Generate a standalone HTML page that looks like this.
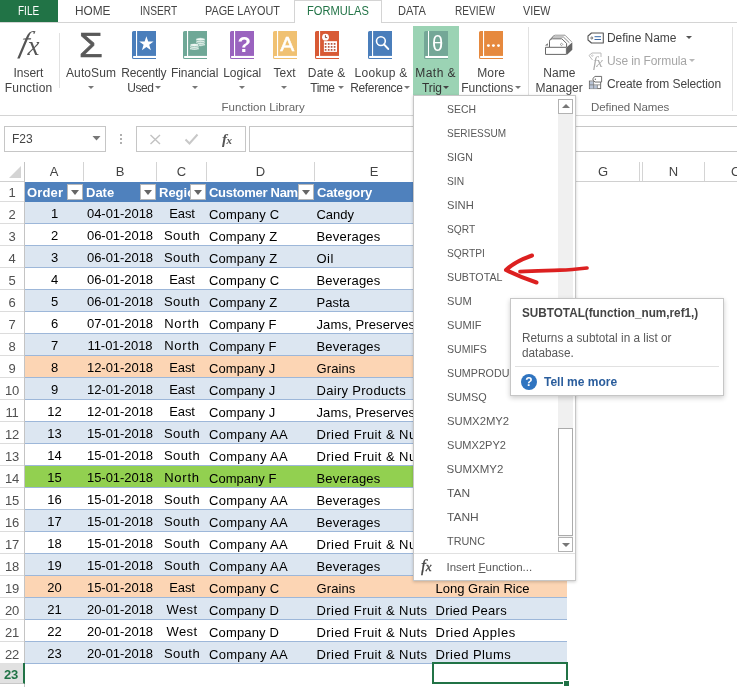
<!DOCTYPE html><html><head><meta charset="utf-8"><title>Excel</title><style>*{box-sizing:border-box;margin:0;padding:0}
html,body{width:737px;height:687px;overflow:hidden;background:#fff}
#app{will-change:transform;position:relative;width:737px;height:687px;overflow:hidden;background:#fff;font-family:"Liberation Sans",sans-serif;color:#444}
.abs{position:absolute}
/* tabs */
.tabs{position:absolute;left:0;top:0;width:737px;height:23px;border-bottom:1px solid #d4d4d4}
.tab{position:absolute;top:0;height:23px;line-height:22px;font-size:12px;color:#444;white-space:nowrap;text-align:center}
.tab.file{left:0;width:58px;background:#217346;height:22px}
.tab.tt{transform-origin:0 50%;text-align:left;font-size:12.5px}
.tab.tf{color:#fff}.tab.ta{color:#217346}
.tab.act{left:294px;width:88px;height:23px;border:1px solid #d4d4d4;border-bottom:none;background:#fff}
/* ribbon */
.ribbon{position:absolute;left:0;top:24px;width:737px;height:92px;border-bottom:1px solid #d4d4d4;background:#fff}
.rb{position:absolute;top:0;font-size:12px;line-height:16px;color:#444;text-align:center;white-space:nowrap}
.rb .l1{position:absolute;left:0;width:100%;top:40px}
.rb .l2{position:absolute;left:0;width:100%;top:56px}
.arr{display:inline-block;width:0;height:0;border-left:3px solid transparent;border-right:3px solid transparent;border-top:3px solid #777;vertical-align:middle;margin-left:3px}
.arr.solo{margin-left:0;position:relative;top:-1px}
.vsep{position:absolute;width:1px;background:#e1e1e1}
.glabel{position:absolute;top:76px;font-size:11.5px;color:#666;white-space:nowrap;line-height:14px}
.sm{position:absolute;font-size:12px;color:#444;white-space:nowrap;line-height:16px}
/* formula bar */
.fbar{position:absolute;left:0;top:116px;width:737px;height:44px;background:#fff}
.box{position:absolute;top:10px;height:26px;border:1px solid #c6c6c6;background:#fff}
/* grid */
.grid{position:absolute;left:0;top:0;width:737px;height:687px;font-size:13px;color:#000}
.colhdr{position:absolute;left:0;top:160px;width:737px;height:22px;background:#fff}
.hl{position:absolute;height:1px;background:#d0d0d0}
.vl{position:absolute;left:24px;top:162px;width:1px;height:525px;background:#c4c4c4}
.corner{position:absolute;left:9px;top:6px}
.ch{position:absolute;top:2px;height:19px;line-height:20px;text-align:center;color:#444;font-size:13px;border-right:1px solid #d4d4d4}
.ch.dbl{border-left:1px solid #d4d4d4}
.rh{position:absolute;left:0;width:24px;height:22px;line-height:25px;text-align:center;color:#505050;font-size:13px;border-bottom:1px solid #dcdcdc;letter-spacing:-0.3px}
.rh.sel{background:#e1e1e1;color:#217346;font-weight:bold;width:25px;height:21px;line-height:23px;margin-top:-1px;padding-right:1px;border-right:2px solid #217346;border-bottom:1px solid #c8c8c8}
.hdrrow{position:absolute;left:25px;width:542px;height:20px;background:#4f81bd}
.hc{position:absolute;top:0;height:20px;overflow:hidden;color:#fff;font-weight:bold;line-height:22px;white-space:nowrap;padding-left:2px}
.fb{position:absolute;right:1px;top:2px;width:16px;height:16px;background:#fff;border:1px solid #b8b8b8}
.fb i{position:absolute;left:3px;top:5px;width:0;height:0;border-left:4px solid transparent;border-right:4px solid transparent;border-top:5px solid #666}
.row{position:absolute;left:25px;width:542px;height:22px;border-bottom:1px solid #9db7d9}
.row.b{background:#dce6f1}.row.w{background:#fff}.row.o{background:#fcd5b4}.row.g{background:#92d050}
.c{position:absolute;top:0;height:22px;line-height:25px;white-space:nowrap;overflow:hidden}
.c.ac{text-align:center;line-height:23px}.c.al{padding-left:3px}
.selcell{position:absolute;left:432px;top:662px;width:136px;height:22px;border:2px solid #217346;background:#fff}
.selhandle{position:absolute;left:563px;top:680px;width:7px;height:7px;background:#217346;border:1px solid #fff}
/* popup */
.popup{position:absolute;left:413px;top:95px;width:163px;height:486px;background:#fff;border:1px solid #c6c6c6;box-shadow:0 1px 3px rgba(0,0,0,.2);font-size:12px;color:#444}
.mi{position:absolute;left:32.5px;height:24px;line-height:24px;white-space:nowrap;color:#595959;font-size:11.5px;transform-origin:0 50%}
.msep{position:absolute;left:0;top:457px;width:161px;height:1px;background:#e1e1e1}
.mfx{position:absolute;left:7px;top:459px;font-family:"Liberation Serif",serif;font-style:italic;font-size:17px;line-height:22px;color:#444;-webkit-text-stroke:0.3px #444}
.mfx span{font-size:13px}
.strack{position:absolute;left:144px;top:3px;width:15px;height:453px;background:#f0f0f0}
.sbtn{position:absolute;left:144px;width:15px;height:15px;background:#fff;border:1px solid #b2b2b2}
.sbtn.up{top:3px}.sbtn.dn{top:441px}
.sbtn i{position:absolute;left:3px;width:0;height:0;border-left:4px solid transparent;border-right:4px solid transparent}
.sbtn.up i{top:4px;border-bottom:4px solid #777}
.sbtn.dn i{top:5px;border-top:4px solid #777}
.sthumb{position:absolute;left:144px;top:332px;width:15px;height:108px;background:#fff;border:1px solid #ababab}
/* tooltip */
.tip{position:absolute;left:510px;top:298px;width:214px;height:98px;background:#fff;border:1px solid #c6c6c6;box-shadow:0 2px 5px rgba(0,0,0,.2);font-size:12px;color:#555}
.tip .t{position:absolute;left:11px;top:6px;font-weight:bold;color:#444;line-height:16px;white-space:nowrap;transform:scaleX(.978);transform-origin:0 50%}
.tip .d{position:absolute;left:11px;top:32px;line-height:15px;white-space:nowrap;transform:scaleX(.983);transform-origin:0 50%;color:#595959}
.tip .s{position:absolute;left:4px;top:67px;width:204px;height:1px;background:#e1e1e1}
.tip .q{position:absolute;left:10px;top:75px;width:16px;height:16px;border-radius:8px;background:#2f74c0;color:#fff;font-weight:bold;font-size:12px;line-height:16px;text-align:center}
.tip .m{position:absolute;left:33px;top:75px;font-weight:bold;color:#2a5d9c;line-height:16px;white-space:nowrap}
.lb{position:absolute;font-size:12px;line-height:16px;white-space:nowrap;color:#444}
.ar{position:absolute;width:0;height:0;border-left:3px solid transparent;border-right:3px solid transparent;border-top:3px solid #777}
</style></head><body><div id="app">
<div class="tabs">
<div class="tab file"></div>
<div class="tab act"></div>
<div class="tab tt tf" id="tab0" style="left:18.3px;transform:scaleX(0.8)">FILE</div>
<div class="tab tt" id="tab1" style="left:75.3px;transform:scaleX(0.945)">HOME</div>
<div class="tab tt" id="tab2" style="left:139.6px;transform:scaleX(0.815)">INSERT</div>
<div class="tab tt" id="tab3" style="left:204.7px;transform:scaleX(0.868)">PAGE LAYOUT</div>
<div class="tab tt ta" id="tab4" style="left:307px;transform:scaleX(0.89)">FORMULAS</div>
<div class="tab tt" id="tab5" style="left:397.5px;transform:scaleX(0.885)">DATA</div>
<div class="tab tt" id="tab6" style="left:454.5px;transform:scaleX(0.812)">REVIEW</div>
<div class="tab tt" id="tab7" style="left:523px;transform:scaleX(0.86)">VIEW</div>
</div>
<div class="ribbon">
<div class="abs" style="left:413px;top:2px;width:46px;height:70px;background:#9bd3b4"></div>
<div class="lb" style="left:13.4px;top:41px;letter-spacing:0px;color:#444">Insert</div>
<div class="lb" style="left:4.8px;top:56px;letter-spacing:0.2px;color:#444">Function</div>
<div class="lb" style="left:66px;top:41px;letter-spacing:0.1px;color:#444">AutoSum</div>
<div class="lb" style="left:121.2px;top:41px;letter-spacing:-0.19px;color:#444">Recently</div>
<div class="lb" style="left:127.3px;top:56px;letter-spacing:-0.5px;color:#444">Used</div>
<i class="ar" style="left:154.8px;top:62px;border-top-color:#777"></i>
<div class="lb" style="left:171px;top:41px;letter-spacing:-0.09px;color:#444">Financial</div>
<div class="lb" style="left:223.2px;top:41px;letter-spacing:0px;color:#444">Logical</div>
<div class="lb" style="left:273.6px;top:41px;letter-spacing:0px;color:#444">Text</div>
<div class="lb" style="left:307.8px;top:41px;letter-spacing:0.17px;color:#444">Date &amp;</div>
<div class="lb" style="left:310.3px;top:56px;letter-spacing:-0.5px;color:#444">Time</div>
<i class="ar" style="left:338px;top:62px;border-top-color:#777"></i>
<div class="lb" style="left:354.6px;top:41px;letter-spacing:0.27px;color:#444">Lookup &amp;</div>
<div class="lb" style="left:350.2px;top:56px;letter-spacing:-0.33px;color:#444">Reference</div>
<i class="ar" style="left:403.9px;top:62px;border-top-color:#777"></i>
<div class="lb" style="left:415.3px;top:41px;letter-spacing:0.45px;color:#333">Math &amp;</div>
<div class="lb" style="left:422px;top:56px;letter-spacing:-0.1px;color:#333">Trig</div>
<i class="ar" style="left:443.1px;top:62px;border-top-color:#444"></i>
<div class="lb" style="left:477.2px;top:41px;letter-spacing:0.17px;color:#444">More</div>
<div class="lb" style="left:461.2px;top:56px;letter-spacing:0px;color:#444">Functions</div>
<i class="ar" style="left:515px;top:62px;border-top-color:#777"></i>
<div class="lb" style="left:543.3px;top:41px;letter-spacing:0px;color:#444">Name</div>
<div class="lb" style="left:535.4px;top:56px;letter-spacing:0px;color:#444">Manager</div>
<i class="ar" style="left:88.4px;top:61.5px"></i>
<i class="ar" style="left:191.7px;top:61.5px"></i>
<i class="ar" style="left:239.4px;top:61.5px"></i>
<i class="ar" style="left:281.1px;top:61.5px"></i>
<div class="vsep" style="left:59px;top:9px;height:55px"></div>
<div class="vsep" style="left:528px;top:3px;height:84px"></div>
<div class="sm" style="left:607px;top:6px;letter-spacing:-0.07px">Define Name</div><i class="ar" style="left:685.5px;top:12px;border-top-color:#555"></i>
<div class="sm" style="left:607px;top:29px;color:#a6a6a6;letter-spacing:-0.11px">Use in Formula</div><i class="ar" style="left:688.5px;top:35px;border-top-color:#b8b8b8"></i>
<div class="sm" style="left:607px;top:52px;letter-spacing:-0.1px">Create from Selection</div>
<div class="vsep" style="left:732px;top:3px;height:84px"></div>
<svg class="abs" style="left:132px;top:7px" width="24" height="28" viewBox="0 0 24 28"><path d="M1.6 0H4V25H2Q1.2 25 1.2 26Q1.2 27 2 27H24V28H1.6Q0 28 0 26.4V1.6Q0 0 1.6 0Z" fill="#4a7ebb"/><path d="M4 0H5.1V25H24V27H2Q1.2 27 1.2 26Q1.2 25 2 25H4Z" fill="#fff"/><rect x="5.1" y="0" width="18.9" height="24.9" fill="#4a7ebb"/><path d="M14.4 5.2L16.2 10.6H21.6L17.2 13.8L18.9 19.2L14.4 15.9L9.9 19.2L11.6 13.8L7.2 10.6H12.6Z" fill="#fff"/></svg><svg class="abs" style="left:183px;top:7px" width="24" height="28" viewBox="0 0 24 28"><path d="M1.6 0H4V25H2Q1.2 25 1.2 26Q1.2 27 2 27H24V28H1.6Q0 28 0 26.4V1.6Q0 0 1.6 0Z" fill="#6fa897"/><path d="M4 0H5.1V25H24V27H2Q1.2 27 1.2 26Q1.2 25 2 25H4Z" fill="#fff"/><rect x="5.1" y="0" width="18.9" height="24.9" fill="#6fa897"/><ellipse cx="17.5" cy="13.55" rx="4.6" ry="1.6" fill="#eef7f3" stroke="#6fa897" stroke-width="0.6"/><ellipse cx="17.5" cy="11.80" rx="4.6" ry="1.6" fill="#eef7f3" stroke="#6fa897" stroke-width="0.6"/><ellipse cx="17.5" cy="10.05" rx="4.6" ry="1.6" fill="#eef7f3" stroke="#6fa897" stroke-width="0.6"/><ellipse cx="17.5" cy="8.30" rx="4.6" ry="1.6" fill="#eef7f3" stroke="#6fa897" stroke-width="0.6"/><ellipse cx="11.4" cy="17.50" rx="4.6" ry="1.6" fill="#eef7f3" stroke="#6fa897" stroke-width="0.6"/><ellipse cx="11.4" cy="15.75" rx="4.6" ry="1.6" fill="#eef7f3" stroke="#6fa897" stroke-width="0.6"/><ellipse cx="11.4" cy="14.00" rx="4.6" ry="1.6" fill="#eef7f3" stroke="#6fa897" stroke-width="0.6"/></svg><svg class="abs" style="left:230px;top:7px" width="24" height="28" viewBox="0 0 24 28"><path d="M1.6 0H4V25H2Q1.2 25 1.2 26Q1.2 27 2 27H24V28H1.6Q0 28 0 26.4V1.6Q0 0 1.6 0Z" fill="#9a63bf"/><path d="M4 0H5.1V25H24V27H2Q1.2 27 1.2 26Q1.2 25 2 25H4Z" fill="#fff"/><rect x="5.1" y="0" width="18.9" height="24.9" fill="#9a63bf"/><text x="14.3" y="20.5" font-family="Liberation Sans, sans-serif" font-weight="bold" font-size="22" fill="#fff" text-anchor="middle">?</text></svg><svg class="abs" style="left:273px;top:7px" width="24" height="28" viewBox="0 0 24 28"><path d="M1.6 0H4V25H2Q1.2 25 1.2 26Q1.2 27 2 27H24V28H1.6Q0 28 0 26.4V1.6Q0 0 1.6 0Z" fill="#f0c172"/><path d="M4 0H5.1V25H24V27H2Q1.2 27 1.2 26Q1.2 25 2 25H4Z" fill="#fff"/><rect x="5.1" y="0" width="18.9" height="24.9" fill="#f0c172"/><text x="14.2" y="19.8" font-family="Liberation Sans, sans-serif" font-size="21" fill="#fff" stroke="#fff" stroke-width="0.5" text-anchor="middle">A</text></svg><svg class="abs" style="left:315px;top:7px" width="24" height="28" viewBox="0 0 24 28"><path d="M1.6 0H4V25H2Q1.2 25 1.2 26Q1.2 27 2 27H24V28H1.6Q0 28 0 26.4V1.6Q0 0 1.6 0Z" fill="#d85a35"/><path d="M4 0H5.1V25H24V27H2Q1.2 27 1.2 26Q1.2 25 2 25H4Z" fill="#fff"/><rect x="5.1" y="0" width="18.9" height="24.9" fill="#d85a35"/><circle cx="10.5" cy="6.2" r="3.4" fill="#fff"/><path d="M10.4 4.2V6.6H12.2" fill="none" stroke="#7a3a2a" stroke-width="0.9"/><rect x="8.9" y="10.2" width="13.1" height="10.7" fill="#fff"/><rect x="9.75" y="12.05" width="1.7" height="1.7" fill="#b4533c"/><rect x="9.75" y="15.05" width="1.7" height="1.7" fill="#b4533c"/><rect x="9.75" y="18.05" width="1.7" height="1.7" fill="#b4533c"/><rect x="12.85" y="12.05" width="1.7" height="1.7" fill="#b4533c"/><rect x="12.85" y="15.05" width="1.7" height="1.7" fill="#b4533c"/><rect x="12.85" y="18.05" width="1.7" height="1.7" fill="#b4533c"/><rect x="15.75" y="12.05" width="1.7" height="1.7" fill="#b4533c"/><rect x="15.75" y="15.05" width="1.7" height="1.7" fill="#b4533c"/><rect x="15.75" y="18.05" width="1.7" height="1.7" fill="#b4533c"/><rect x="18.75" y="12.05" width="1.7" height="1.7" fill="#b4533c"/><rect x="18.75" y="15.05" width="1.7" height="1.7" fill="#b4533c"/><rect x="18.75" y="18.05" width="1.7" height="1.7" fill="#b4533c"/></svg><svg class="abs" style="left:368px;top:7px" width="24" height="28" viewBox="0 0 24 28"><path d="M1.6 0H4V25H2Q1.2 25 1.2 26Q1.2 27 2 27H24V28H1.6Q0 28 0 26.4V1.6Q0 0 1.6 0Z" fill="#4a7ebb"/><path d="M4 0H5.1V25H24V27H2Q1.2 27 1.2 26Q1.2 25 2 25H4Z" fill="#fff"/><rect x="5.1" y="0" width="18.9" height="24.9" fill="#4a7ebb"/><circle cx="12.9" cy="10.1" r="4.4" fill="none" stroke="#fff" stroke-width="1.6"/><path d="M16 13.4L20.2 17.9" stroke="#fff" stroke-width="2.1" stroke-linecap="round"/></svg><svg class="abs" style="left:424px;top:7px" width="24" height="28" viewBox="0 0 24 28"><path d="M1.6 0H4V25H2Q1.2 25 1.2 26Q1.2 27 2 27H24V28H1.6Q0 28 0 26.4V1.6Q0 0 1.6 0Z" fill="#74a797"/><path d="M4 0H5.1V25H24V27H2Q1.2 27 1.2 26Q1.2 25 2 25H4Z" fill="#fff"/><rect x="5.1" y="0" width="18.9" height="24.9" fill="#74a797"/><text x="14.9" y="20.3" font-family="Liberation Sans, sans-serif" font-size="22" fill="#fff" text-anchor="middle" transform="scale(.92 1)">θ</text></svg><svg class="abs" style="left:479px;top:7px" width="24" height="28" viewBox="0 0 24 28"><path d="M1.6 0H4V25H2Q1.2 25 1.2 26Q1.2 27 2 27H24V28H1.6Q0 28 0 26.4V1.6Q0 0 1.6 0Z" fill="#e6893e"/><path d="M4 0H5.1V25H24V27H2Q1.2 27 1.2 26Q1.2 25 2 25H4Z" fill="#fff"/><rect x="5.1" y="0" width="18.9" height="24.9" fill="#e6893e"/><circle cx="9.4" cy="14.6" r="1.45" fill="#fff"/><circle cx="14.4" cy="14.6" r="1.45" fill="#fff"/><circle cx="19.5" cy="14.6" r="1.45" fill="#fff"/></svg><div class="abs" style="left:21px;top:0px;font-family:'Liberation Serif',serif;font-style:italic;font-size:30px;line-height:36px;color:#555;transform:skewX(-14deg);transform-origin:50% 50%">f</div><div class="abs" style="left:27.5px;top:4px;font-family:'Liberation Serif',serif;font-style:italic;font-size:27px;line-height:36px;color:#555">x</div><div class="abs" style="left:79px;top:1px;font-size:35.5px;line-height:41px;color:#595959;transform:scaleX(1.08);transform-origin:0 0;-webkit-text-stroke:0.7px #595959">Σ</div><svg class="abs" style="left:541px;top:6px" width="36" height="28" viewBox="541 30 36 28"><path d="M552.3 37.6Q553 35.2 555.2 35.2H565L571.6 41.8" fill="none" stroke="#8a8a8a" stroke-width="0.9"/><path d="M550.9 39.4Q551.3 37 553.6 37H563.4L569.4 42.8" fill="none" stroke="#7a7a7a" stroke-width="0.9"/><path d="M549.5 47V41.2Q549.5 38.8 552.2 38.8H561.8L566.6 43.4V47" fill="none" stroke="#666" stroke-width="1"/><path d="M561.5 43.1L562.8 44.4L561.5 45.7L560.2 44.4Z" fill="none" stroke="#777" stroke-width="0.7"/><path d="M545.5 47.3H566.4V54.4H545.5Z" fill="#fff" stroke="#666" stroke-width="1"/><path d="M567 47L572.3 42.2V49.8L567 54.8Z" fill="#666"/><path d="M545 45.6L547.8 43.2V45.6Z" fill="#666"/></svg><svg class="abs" style="left:587px;top:7.5px" width="18" height="12" viewBox="0 0 18 12"><path d="M4.5 1H16.3V11H4.5L1 8V4Z" fill="#fff" stroke="#555" stroke-width="1.1" stroke-linejoin="round"/><circle cx="4.8" cy="6" r="1" fill="none" stroke="#555" stroke-width="0.8"/><path d="M7.5 4.7H14M7.5 7.5H14" stroke="#3b6aa8" stroke-width="1"/></svg><svg class="abs" style="left:588px;top:28px" width="20" height="18" viewBox="0 0 20 18"><path d="M1 3.5L4 1H13V5" fill="none" stroke="#bbb" stroke-width="1"/><path d="M1 3.5L4.5 8" fill="none" stroke="#bbb" stroke-width="1"/><circle cx="4.3" cy="3.6" r="0.8" fill="none" stroke="#bbb" stroke-width="0.7"/><text x="5" y="14.5" font-family="Liberation Serif, serif" font-style="italic" font-size="15" fill="#aaa" letter-spacing="-1">fx</text></svg><svg class="abs" style="left:588px;top:51px" width="15" height="15" viewBox="0 0 16 16"><rect x="1.5" y="6.5" width="12" height="8" fill="#fff" stroke="#666" stroke-width="1"/><rect x="2" y="7" width="4" height="7" fill="#b9c4d6"/><rect x="2" y="11" width="8" height="3.5" fill="#b9c4d6"/><path d="M6 6.5V14.5M10 10.5V14.5M1.5 10.5H13.5" stroke="#777" stroke-width="0.8"/><path d="M7.5 1.5H14.5V7.5H7.5L5.3 5.5V3.5Z" fill="#fff" stroke="#666" stroke-width="1" stroke-linejoin="round"/><circle cx="7.8" cy="4.5" r="0.7" fill="#666"/></svg><div class="glabel" style="left:221.5px;letter-spacing:0.05px">Function Library</div>
<div class="glabel" style="left:591px;letter-spacing:-0.08px">Defined Names</div>
</div>
<div class="fbar">
<div class="box" style="left:4px;width:102px"><div class="abs" style="left:7px;top:5px;font-size:12px;line-height:14px;color:#444">F23</div><svg class="abs" style="left:87px;top:9px" width="9" height="5" viewBox="0 0 9 5"><path d="M0.5 0H8.5L4.5 4.5Z" fill="#777"/></svg></div>
<div class="abs" style="left:120px;top:18px;width:2px;height:2px;background:#b0b0b0;box-shadow:0 4px 0 #b0b0b0,0 8px 0 #b0b0b0"></div>
<div class="box" style="left:136px;width:110px">
<svg class="abs" style="left:12px;top:7px" width="13" height="11" viewBox="0 0 13 11"><path d="M1.5 1L11 10M11 1L1.5 10" stroke="#c2c2c2" stroke-width="1.4" fill="none"/></svg>
<svg class="abs" style="left:47px;top:6px" width="15" height="12" viewBox="0 0 15 12"><path d="M1.5 6.5L5.5 10.5L13.5 1.5" stroke="#c8c8c8" stroke-width="2" fill="none"/></svg>
<div class="abs" style="left:85px;top:3px;font-family:'Liberation Serif',serif;font-style:italic;font-weight:bold;font-size:15px;line-height:18px;color:#555;letter-spacing:-0.5px">f<span style="font-size:11px">x</span></div>
</div>
<div class="box" style="left:249px;width:500px"></div>
</div>

<div class="grid">
<div class="colhdr">
<svg class="corner" width="12" height="12" viewBox="0 0 12 12"><path d="M12 0V12H0Z" fill="#d4d4d4"/></svg>
<div class="ch" style="left:25px;width:59px">A</div>
<div class="ch" style="left:84px;width:73px">B</div>
<div class="ch" style="left:157px;width:50px">C</div>
<div class="ch" style="left:207px;width:108px">D</div>
<div class="ch" style="left:315px;width:119px">E</div>
<div class="ch" style="left:567px;width:73px">G</div>
<div class="ch dbl" style="left:642px;width:63px">N</div>
<div class="ch" style="left:705px;width:63px">O</div>
</div>
<div class="hl" style="left:0;top:181px;width:25px"></div><div class="hl" style="left:568px;top:181px;width:169px"></div><div class="vl"></div>
<div class="rh" style="top:182px;height:20px;line-height:21px">1</div>
<div class="hdrrow" style="top:182px">
<div class="hc" style="left:0px;width:59px;letter-spacing:0.15px"><span class="ht">Order</span><span class="fb"><i></i></span></div>
<div class="hc" style="left:59px;width:73px;letter-spacing:0px"><span class="ht">Date</span><span class="fb"><i></i></span></div>
<div class="hc" style="left:132px;width:50px;letter-spacing:0px"><span class="ht">Region</span><span class="fb"><i></i></span></div>
<div class="hc" style="left:182px;width:108px;letter-spacing:-0.3px"><span class="ht">Customer Name</span><span class="fb"><i></i></span></div>
<div class="hc" style="left:290px;width:119px;letter-spacing:-0.15px"><span class="ht">Category</span><span class="fb"><i></i></span></div>
<div class="hc" style="left:409px;width:134px;letter-spacing:0px"><span class="ht">Product</span><span class="fb"><i></i></span></div>
</div>
<div class="rh" style="top:202px">2</div>
<div class="row b" style="top:202px">
<div class="c ac" style="left:0px;width:59px">1</div>
<div class="c ac" style="left:59px;width:73px;letter-spacing:-0.05px;text-indent:-1px">04-01-2018</div>
<div class="c ac" style="left:132px;width:50px;letter-spacing:-0.15px">East</div>
<div class="c al" style="left:182px;width:108px;letter-spacing:0.18px;padding-left:2px">Company C</div>
<div class="c al" style="left:290px;width:119px;letter-spacing:-0.02px;padding-left:1.5px">Candy</div>
<div class="c al" style="left:409px;width:134px;padding-left:1.5px"></div>
</div>
<div class="rh" style="top:224px">3</div>
<div class="row w" style="top:224px">
<div class="c ac" style="left:0px;width:59px">2</div>
<div class="c ac" style="left:59px;width:73px;letter-spacing:-0.05px;text-indent:-1px">06-01-2018</div>
<div class="c ac" style="left:132px;width:50px;letter-spacing:0.44px">South</div>
<div class="c al" style="left:182px;width:108px;letter-spacing:0.12px;padding-left:2px">Company Z</div>
<div class="c al" style="left:290px;width:119px;letter-spacing:0.2px;padding-left:1.5px">Beverages</div>
<div class="c al" style="left:409px;width:134px;padding-left:1.5px"></div>
</div>
<div class="rh" style="top:246px">4</div>
<div class="row b" style="top:246px">
<div class="c ac" style="left:0px;width:59px">3</div>
<div class="c ac" style="left:59px;width:73px;letter-spacing:-0.05px;text-indent:-1px">06-01-2018</div>
<div class="c ac" style="left:132px;width:50px;letter-spacing:0.44px">South</div>
<div class="c al" style="left:182px;width:108px;letter-spacing:0.12px;padding-left:2px">Company Z</div>
<div class="c al" style="left:290px;width:119px;letter-spacing:0.5px;padding-left:1.5px">Oil</div>
<div class="c al" style="left:409px;width:134px;padding-left:1.5px"></div>
</div>
<div class="rh" style="top:268px">5</div>
<div class="row w" style="top:268px">
<div class="c ac" style="left:0px;width:59px">4</div>
<div class="c ac" style="left:59px;width:73px;letter-spacing:-0.05px;text-indent:-1px">06-01-2018</div>
<div class="c ac" style="left:132px;width:50px;letter-spacing:-0.15px">East</div>
<div class="c al" style="left:182px;width:108px;letter-spacing:0.18px;padding-left:2px">Company C</div>
<div class="c al" style="left:290px;width:119px;letter-spacing:0.2px;padding-left:1.5px">Beverages</div>
<div class="c al" style="left:409px;width:134px;padding-left:1.5px"></div>
</div>
<div class="rh" style="top:290px">6</div>
<div class="row b" style="top:290px">
<div class="c ac" style="left:0px;width:59px">5</div>
<div class="c ac" style="left:59px;width:73px;letter-spacing:-0.05px;text-indent:-1px">06-01-2018</div>
<div class="c ac" style="left:132px;width:50px;letter-spacing:0.44px">South</div>
<div class="c al" style="left:182px;width:108px;letter-spacing:0.12px;padding-left:2px">Company Z</div>
<div class="c al" style="left:290px;width:119px;padding-left:1.5px">Pasta</div>
<div class="c al" style="left:409px;width:134px;padding-left:1.5px"></div>
</div>
<div class="rh" style="top:312px">7</div>
<div class="row w" style="top:312px">
<div class="c ac" style="left:0px;width:59px">6</div>
<div class="c ac" style="left:59px;width:73px;letter-spacing:-0.05px;text-indent:-1px">07-01-2018</div>
<div class="c ac" style="left:132px;width:50px;letter-spacing:0.76px">North</div>
<div class="c al" style="left:182px;width:108px;letter-spacing:0.03px;padding-left:2px">Company F</div>
<div class="c al" style="left:290px;width:119px;letter-spacing:0.12px;padding-left:1.5px">Jams, Preserves</div>
<div class="c al" style="left:409px;width:134px;padding-left:1.5px"></div>
</div>
<div class="rh" style="top:334px">8</div>
<div class="row b" style="top:334px">
<div class="c ac" style="left:0px;width:59px">7</div>
<div class="c ac" style="left:59px;width:73px;letter-spacing:-0.05px;text-indent:-1px">11-01-2018</div>
<div class="c ac" style="left:132px;width:50px;letter-spacing:0.76px">North</div>
<div class="c al" style="left:182px;width:108px;letter-spacing:0.03px;padding-left:2px">Company F</div>
<div class="c al" style="left:290px;width:119px;letter-spacing:0.2px;padding-left:1.5px">Beverages</div>
<div class="c al" style="left:409px;width:134px;padding-left:1.5px"></div>
</div>
<div class="rh" style="top:356px">9</div>
<div class="row o" style="top:356px">
<div class="c ac" style="left:0px;width:59px">8</div>
<div class="c ac" style="left:59px;width:73px;letter-spacing:-0.05px;text-indent:-1px">12-01-2018</div>
<div class="c ac" style="left:132px;width:50px;letter-spacing:-0.15px">East</div>
<div class="c al" style="left:182px;width:108px;letter-spacing:0.07px;padding-left:2px">Company J</div>
<div class="c al" style="left:290px;width:119px;letter-spacing:0.1px;padding-left:1.5px">Grains</div>
<div class="c al" style="left:409px;width:134px;padding-left:1.5px"></div>
</div>
<div class="rh" style="top:378px">10</div>
<div class="row b" style="top:378px">
<div class="c ac" style="left:0px;width:59px">9</div>
<div class="c ac" style="left:59px;width:73px;letter-spacing:-0.05px;text-indent:-1px">12-01-2018</div>
<div class="c ac" style="left:132px;width:50px;letter-spacing:-0.15px">East</div>
<div class="c al" style="left:182px;width:108px;letter-spacing:0.07px;padding-left:2px">Company J</div>
<div class="c al" style="left:290px;width:119px;letter-spacing:0.3px;padding-left:1.5px">Dairy Products</div>
<div class="c al" style="left:409px;width:134px;padding-left:1.5px"></div>
</div>
<div class="rh" style="top:400px">11</div>
<div class="row w" style="top:400px">
<div class="c ac" style="left:0px;width:59px">12</div>
<div class="c ac" style="left:59px;width:73px;letter-spacing:-0.05px;text-indent:-1px">12-01-2018</div>
<div class="c ac" style="left:132px;width:50px;letter-spacing:-0.15px">East</div>
<div class="c al" style="left:182px;width:108px;letter-spacing:0.07px;padding-left:2px">Company J</div>
<div class="c al" style="left:290px;width:119px;letter-spacing:0.12px;padding-left:1.5px">Jams, Preserves</div>
<div class="c al" style="left:409px;width:134px;padding-left:1.5px"></div>
</div>
<div class="rh" style="top:422px">12</div>
<div class="row b" style="top:422px">
<div class="c ac" style="left:0px;width:59px">13</div>
<div class="c ac" style="left:59px;width:73px;letter-spacing:-0.05px;text-indent:-1px">15-01-2018</div>
<div class="c ac" style="left:132px;width:50px;letter-spacing:0.44px">South</div>
<div class="c al" style="left:182px;width:108px;letter-spacing:0.3px;padding-left:2px">Company AA</div>
<div class="c al" style="left:290px;width:119px;letter-spacing:0.43px;padding-left:1.5px">Dried Fruit &amp; Nuts</div>
<div class="c al" style="left:409px;width:134px;padding-left:1.5px"></div>
</div>
<div class="rh" style="top:444px">13</div>
<div class="row w" style="top:444px">
<div class="c ac" style="left:0px;width:59px">14</div>
<div class="c ac" style="left:59px;width:73px;letter-spacing:-0.05px;text-indent:-1px">15-01-2018</div>
<div class="c ac" style="left:132px;width:50px;letter-spacing:0.44px">South</div>
<div class="c al" style="left:182px;width:108px;letter-spacing:0.3px;padding-left:2px">Company AA</div>
<div class="c al" style="left:290px;width:119px;letter-spacing:0.43px;padding-left:1.5px">Dried Fruit &amp; Nuts</div>
<div class="c al" style="left:409px;width:134px;padding-left:1.5px"></div>
</div>
<div class="rh" style="top:466px">14</div>
<div class="row g" style="top:466px">
<div class="c ac" style="left:0px;width:59px">15</div>
<div class="c ac" style="left:59px;width:73px;letter-spacing:-0.05px;text-indent:-1px">15-01-2018</div>
<div class="c ac" style="left:132px;width:50px;letter-spacing:0.76px">North</div>
<div class="c al" style="left:182px;width:108px;letter-spacing:0.03px;padding-left:2px">Company F</div>
<div class="c al" style="left:290px;width:119px;letter-spacing:0.2px;padding-left:1.5px">Beverages</div>
<div class="c al" style="left:409px;width:134px;padding-left:1.5px"></div>
</div>
<div class="rh" style="top:488px">15</div>
<div class="row w" style="top:488px">
<div class="c ac" style="left:0px;width:59px">16</div>
<div class="c ac" style="left:59px;width:73px;letter-spacing:-0.05px;text-indent:-1px">15-01-2018</div>
<div class="c ac" style="left:132px;width:50px;letter-spacing:0.44px">South</div>
<div class="c al" style="left:182px;width:108px;letter-spacing:0.3px;padding-left:2px">Company AA</div>
<div class="c al" style="left:290px;width:119px;letter-spacing:0.2px;padding-left:1.5px">Beverages</div>
<div class="c al" style="left:409px;width:134px;padding-left:1.5px"></div>
</div>
<div class="rh" style="top:510px">16</div>
<div class="row b" style="top:510px">
<div class="c ac" style="left:0px;width:59px">17</div>
<div class="c ac" style="left:59px;width:73px;letter-spacing:-0.05px;text-indent:-1px">15-01-2018</div>
<div class="c ac" style="left:132px;width:50px;letter-spacing:0.44px">South</div>
<div class="c al" style="left:182px;width:108px;letter-spacing:0.3px;padding-left:2px">Company AA</div>
<div class="c al" style="left:290px;width:119px;letter-spacing:0.2px;padding-left:1.5px">Beverages</div>
<div class="c al" style="left:409px;width:134px;padding-left:1.5px"></div>
</div>
<div class="rh" style="top:532px">17</div>
<div class="row w" style="top:532px">
<div class="c ac" style="left:0px;width:59px">18</div>
<div class="c ac" style="left:59px;width:73px;letter-spacing:-0.05px;text-indent:-1px">15-01-2018</div>
<div class="c ac" style="left:132px;width:50px;letter-spacing:0.44px">South</div>
<div class="c al" style="left:182px;width:108px;letter-spacing:0.3px;padding-left:2px">Company AA</div>
<div class="c al" style="left:290px;width:119px;letter-spacing:0.43px;padding-left:1.5px">Dried Fruit &amp; Nuts</div>
<div class="c al" style="left:409px;width:134px;padding-left:1.5px"></div>
</div>
<div class="rh" style="top:554px">18</div>
<div class="row b" style="top:554px">
<div class="c ac" style="left:0px;width:59px">19</div>
<div class="c ac" style="left:59px;width:73px;letter-spacing:-0.05px;text-indent:-1px">15-01-2018</div>
<div class="c ac" style="left:132px;width:50px;letter-spacing:0.44px">South</div>
<div class="c al" style="left:182px;width:108px;letter-spacing:0.3px;padding-left:2px">Company AA</div>
<div class="c al" style="left:290px;width:119px;letter-spacing:0.2px;padding-left:1.5px">Beverages</div>
<div class="c al" style="left:409px;width:134px;padding-left:1.5px"></div>
</div>
<div class="rh" style="top:576px">19</div>
<div class="row o" style="top:576px">
<div class="c ac" style="left:0px;width:59px">20</div>
<div class="c ac" style="left:59px;width:73px;letter-spacing:-0.05px;text-indent:-1px">15-01-2018</div>
<div class="c ac" style="left:132px;width:50px;letter-spacing:-0.15px">East</div>
<div class="c al" style="left:182px;width:108px;letter-spacing:0.18px;padding-left:2px">Company C</div>
<div class="c al" style="left:290px;width:119px;letter-spacing:0.1px;padding-left:1.5px">Grains</div>
<div class="c al" style="left:409px;width:134px;padding-left:1.5px">Long Grain Rice</div>
</div>
<div class="rh" style="top:598px">20</div>
<div class="row b" style="top:598px">
<div class="c ac" style="left:0px;width:59px">21</div>
<div class="c ac" style="left:59px;width:73px;letter-spacing:-0.05px;text-indent:-1px">20-01-2018</div>
<div class="c ac" style="left:132px;width:50px;letter-spacing:0.45px">West</div>
<div class="c al" style="left:182px;width:108px;letter-spacing:0.15px;padding-left:2px">Company D</div>
<div class="c al" style="left:290px;width:119px;letter-spacing:0.43px;padding-left:1.5px">Dried Fruit &amp; Nuts</div>
<div class="c al" style="left:409px;width:134px;letter-spacing:0.25px;padding-left:1.5px">Dried Pears</div>
</div>
<div class="rh" style="top:620px">21</div>
<div class="row w" style="top:620px">
<div class="c ac" style="left:0px;width:59px">22</div>
<div class="c ac" style="left:59px;width:73px;letter-spacing:-0.05px;text-indent:-1px">20-01-2018</div>
<div class="c ac" style="left:132px;width:50px;letter-spacing:0.45px">West</div>
<div class="c al" style="left:182px;width:108px;letter-spacing:0.15px;padding-left:2px">Company D</div>
<div class="c al" style="left:290px;width:119px;letter-spacing:0.43px;padding-left:1.5px">Dried Fruit &amp; Nuts</div>
<div class="c al" style="left:409px;width:134px;letter-spacing:0.55px;padding-left:1.5px">Dried Apples</div>
</div>
<div class="rh" style="top:642px">22</div>
<div class="row b" style="top:642px">
<div class="c ac" style="left:0px;width:59px">23</div>
<div class="c ac" style="left:59px;width:73px;letter-spacing:-0.05px;text-indent:-1px">20-01-2018</div>
<div class="c ac" style="left:132px;width:50px;letter-spacing:0.44px">South</div>
<div class="c al" style="left:182px;width:108px;letter-spacing:0.3px;padding-left:2px">Company AA</div>
<div class="c al" style="left:290px;width:119px;letter-spacing:0.43px;padding-left:1.5px">Dried Fruit &amp; Nuts</div>
<div class="c al" style="left:409px;width:134px;letter-spacing:0.45px;padding-left:1.5px">Dried Plums</div>
</div>
<div class="rh sel" style="top:664px">23</div>
<div class="selcell"></div><div class="selhandle"></div>
</div>
<div class="popup">
<div class="mi" style="top:1px;transform:scaleX(0.906)">SECH</div>
<div class="mi" style="top:25px;transform:scaleX(0.871)">SERIESSUM</div>
<div class="mi" style="top:49px;transform:scaleX(0.919)">SIGN</div>
<div class="mi" style="top:73px;transform:scaleX(0.892)">SIN</div>
<div class="mi" style="top:97px;transform:scaleX(0.974)">SINH</div>
<div class="mi" style="top:121px;transform:scaleX(0.889)">SQRT</div>
<div class="mi" style="top:145px;transform:scaleX(0.891)">SQRTPI</div>
<div class="mi" style="top:169px;transform:scaleX(0.93)">SUBTOTAL</div>
<div class="mi" style="top:193px;transform:scaleX(0.965)">SUM</div>
<div class="mi" style="top:217px;transform:scaleX(0.965)">SUMIF</div>
<div class="mi" style="top:241px;transform:scaleX(0.917)">SUMIFS</div>
<div class="mi" style="top:265px;transform:scaleX(0.93)">SUMPRODUCT</div>
<div class="mi" style="top:289px;transform:scaleX(0.944)">SUMSQ</div>
<div class="mi" style="top:313px;transform:scaleX(0.982)">SUMX2MY2</div>
<div class="mi" style="top:337px;transform:scaleX(0.962)">SUMX2PY2</div>
<div class="mi" style="top:361px;transform:scaleX(1.0)">SUMXMY2</div>
<div class="mi" style="top:385px;transform:scaleX(1.039)">TAN</div>
<div class="mi" style="top:409px;transform:scaleX(1.04)">TANH</div>
<div class="mi" style="top:433px;transform:scaleX(0.944)">TRUNC</div>
<div class="msep"></div>
<div class="mfx">f<span>x</span></div><div class="mi ins" style="top:459px">Insert <u>F</u>unction...</div>
<div class="strack"></div><div class="sbtn up"><i></i></div><div class="sthumb"></div><div class="sbtn dn"><i></i></div>
</div>
<svg class="abs" style="left:495px;top:245px" width="105" height="50" viewBox="495 245 105 50"><path d="M532 255.5 C522 259 511 265 506 270 C514 274 526 279 536.5 282.5" fill="none" stroke="#dc2020" stroke-width="4" stroke-linecap="round" stroke-linejoin="round"/><path d="M520 271.6 C535 270.2 548 270.8 560 270.2 C570 269.8 578 269 587 268" fill="none" stroke="#dc2020" stroke-width="3.7" stroke-linecap="round"/></svg>
<div class="tip"><div class="t">SUBTOTAL(function_num,ref1,)</div><div class="d">Returns a subtotal in a list or<br>database.</div><div class="s"></div><div class="q">?</div><div class="m">Tell me more</div></div>

</div></body></html>
